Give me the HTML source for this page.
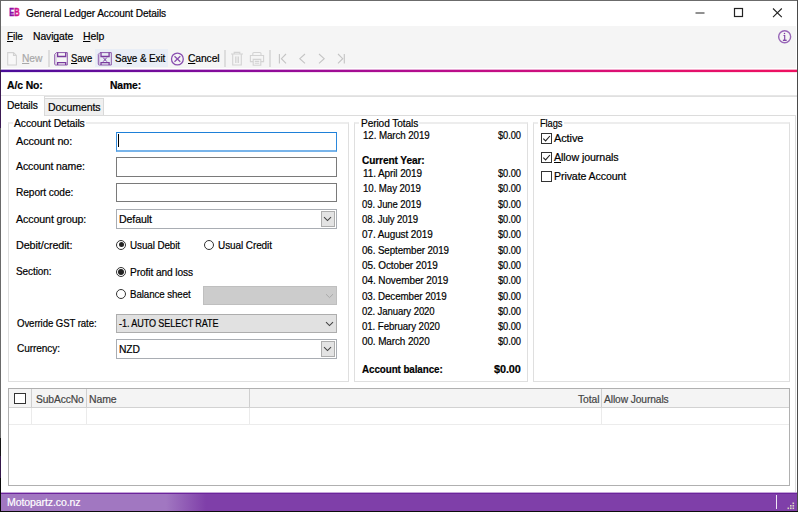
<!DOCTYPE html>
<html><head><meta charset="utf-8"><title>General Ledger Account Details</title>
<style>
html,body{margin:0;padding:0;background:#fff;}
body{width:798px;height:512px;overflow:hidden;}
#win{position:relative;width:798px;height:512px;overflow:hidden;background:#fff;
 font:12px/14px "Liberation Sans",sans-serif;color:#000;}
#win div,#win svg{position:absolute;box-sizing:border-box;}
.t{position:absolute;-webkit-text-stroke:0.2px;transform-origin:0 0;white-space:nowrap;font-size:11px;line-height:14px;height:14px;}
.t u{text-decoration:underline;text-decoration-thickness:1px;text-underline-offset:1px;text-decoration-skip-ink:none;}
.gb{border:1px solid #dfdfdf;border-top:2px solid #ededed;}
.inp{border:1px solid #7a7a7a;background:#fff;}
.cmb{border:1px solid #a9adb3;background:#fff;}
.rad{border:1px solid #333;border-radius:50%;background:#fff;}
.chk{border:1px solid #333;background:#fff;}
.sep{background:#dddddd;width:2px;}

</style></head>
<body>
<div id="win">
<!-- window chrome -->
<div style="left:0;top:0;width:798px;height:26px;background:#fff;"></div>
<div style="left:1px;top:26px;width:795px;height:42px;background:#f5f5f5;"></div>
<div style="left:1px;top:70px;width:796px;height:2px;background:linear-gradient(90deg,#4a0d9a 0%,#8a0c9c 30%,#b80d8c 55%,#dc1072 78%,#ee1160 100%);"></div>
<div style="left:1px;top:69px;width:796px;height:1px;opacity:0.35;background:linear-gradient(90deg,#4a0d9a 0%,#8a0c9c 30%,#b80d8c 55%,#dc1072 78%,#ee1160 100%);"></div>
<div style="left:1px;top:72px;width:796px;height:1px;opacity:0.12;background:linear-gradient(90deg,#4a0d9a 0%,#8a0c9c 30%,#b80d8c 55%,#dc1072 78%,#ee1160 100%);"></div>
<!-- logo -->
<svg style="left:6px;top:4px" width="20" height="16" viewBox="0 0 20 16">
 <defs><linearGradient id="lgg" x1="0" x2="1" y1="0" y2="0"><stop offset="0" stop-color="#6411b0"/><stop offset="0.5" stop-color="#b8149c"/><stop offset="1" stop-color="#e8167a"/></linearGradient></defs>
 <text x="3.2" y="11.8" font-family="Liberation Sans, sans-serif" font-weight="bold" font-size="10" textLength="10.4" lengthAdjust="spacingAndGlyphs" fill="url(#lgg)" stroke="url(#lgg)" stroke-width="0.45">EB</text>
</svg>
<!-- caption buttons -->
<svg style="left:690px;top:4px" width="100" height="18" viewBox="0 0 100 18">
 <path d="M5.5 9H14.5" stroke="#222" stroke-width="1" fill="none"/>
 <rect x="44.5" y="4.5" width="8" height="8" stroke="#222" stroke-width="1.2" fill="none"/>
 <path d="M83 4.5L91.8 13.2M91.8 4.5L83 13.2" stroke="#222" stroke-width="1.1" fill="none"/>
</svg>
<!-- info icon -->
<svg style="left:776px;top:29px" width="18" height="18" viewBox="0 0 18 18">
 <circle cx="8.65" cy="7.75" r="6" stroke="#9866b8" stroke-width="1.4" fill="none"/>
 <path d="M7.5 6.5H8.7V11" stroke="#7d3ea3" stroke-width="1.1" fill="none"/>
 <path d="M6.9 11.3H10.7" stroke="#7d3ea3" stroke-width="1.3" fill="none"/>
 <circle cx="8.5" cy="4.5" r="0.75" fill="#7d3ea3"/>
</svg>
<!-- toolbar -->
<div style="left:95px;top:49px;width:73px;height:18px;background:#e9eef6;"></div>
<svg style="left:0;top:46px" width="360" height="24" viewBox="0 46 360 24">
 <!-- new -->
 <path d="M7.7 52.6H13.5L16.4 55.5V65H7.7Z M13.5 52.6V55.5H16.4" stroke="#d2d2d2" stroke-width="1.1" fill="#f8f8f8"/>
 <!-- save -->
 <g stroke="#7a3a9e" stroke-width="1" fill="none">
  <path d="M56.4 52.6H67.3V65H55.7Q54.7 65 54.7 64V54.4Z" stroke="#8c58ab"/>
  <path d="M57.6 52.6V56.5H65.7V52.6" stroke-width="1.3"/>
  <path d="M57.6 65V62.6H65.7V65" stroke-width="1.3"/>
  <path d="M56 53.5V64.5" stroke="#c9b1d9" stroke-width="0.8"/>
 </g>
 <!-- save & exit -->
 <g stroke="#7a3a9e" stroke-width="1" fill="none">
  <path d="M100 52.6H111.3V65H99.3Q98.3 65 98.3 64V54.4Z" stroke="#8c58ab"/>
  <path d="M101 52.6V56.5H109.1V52.6" stroke-width="1.3"/>
  <path d="M101 65V62.6H109.1V65" stroke-width="1.3"/>
  <path d="M103.2 57.6L106.8 61.6M106.8 57.6L103.2 61.6" stroke-width="1"/>
  <path d="M99.6 53.5V64.5" stroke="#c9b1d9" stroke-width="0.8"/>
 </g>
 <!-- cancel -->
 <circle cx="177.4" cy="59" r="5.9" stroke="#8a4fb0" stroke-width="1.3" fill="none"/>
 <path d="M174.5 56.2L180.3 61.8M180.3 56.2L174.5 61.8" stroke="#8a4fb0" stroke-width="1.3" fill="none"/>
 <!-- trash -->
 <g stroke="#d3d3d3" stroke-width="1.1" fill="none">
  <path d="M231 54H243M234.2 54V52.4H239.8V54M232.7 54V65H241.3V54"/>
  <path d="M235.8 56.4V63M238.3 56.4V63" stroke-width="1.3"/>
  <path d="M236.4 56.4H237.7V63H236.4Z" fill="#e4e4e4" stroke="none"/>
 </g>
 <!-- printer -->
 <g stroke="#d3d3d3" stroke-width="1.1" fill="none">
  <path d="M252.8 55.4V53.6Q252.8 52.5 253.9 52.5H259.9Q261 52.5 261 53.6V55.4"/>
  <path d="M253.2 61.6H250.4V55.5H263.6V61.6H260.8"/>
  <path d="M253.2 59.4H260.8V65.2H253.2Z M254.8 61.4H259.2M254.8 63.2H259.2"/>
 </g>
 <!-- nav -->
 <g stroke="#c4c4c4" stroke-width="1.1" fill="none">
  <path d="M279.4 54V63.4M286 54L281.4 58.7L286 63.4"/>
  <path d="M305 54L299.8 58.7L305 63.4"/>
  <path d="M319 54L324.2 58.7L319 63.4"/>
  <path d="M338 54L342.7 58.7L338 63.4M344.3 54V63.4"/>
 </g>
</svg>
<div class="sep" style="left:48px;top:50px;height:17px;"></div>
<div class="sep" style="left:224px;top:50px;height:17px;"></div>
<div class="sep" style="left:269px;top:50px;height:17px;"></div>

<!-- tab control -->
<div style="left:1px;top:95px;width:796px;height:1px;background:#e6e6e6;"></div><div style="left:1px;top:96px;width:796px;height:1px;background:#e0e0e0;"></div>
<div style="left:44px;top:98px;width:60px;height:17px;background:#f0f0f0;border:1px solid #d9d9d9;border-bottom:none;"></div>
<div style="left:2px;top:115px;width:794px;height:1px;background:#dcdcdc;"></div>
<div style="left:1px;top:96px;width:44px;height:20px;background:#fff;border-right:1px solid #d9d9d9;"></div>

<div style="left:795px;top:115px;width:1px;height:377px;background:#dcdcdc;"></div>
<!-- group boxes -->
<div class="gb" style="left:8px;top:122px;width:341px;height:260px;"></div>
<div style="left:13px;top:118px;width:73px;height:12px;background:#fff;"></div>
<div class="gb" style="left:354px;top:122px;width:174px;height:260px;"></div>
<div style="left:359px;top:118px;width:60px;height:12px;background:#fff;"></div>
<div class="gb" style="left:533px;top:122px;width:257px;height:260px;"></div>
<div style="left:538px;top:118px;width:26px;height:12px;background:#fff;"></div>

<!-- inputs -->
<div class="inp" style="left:116px;top:132px;width:221px;height:20px;border-color:#1e80d8 #2b88dc #78b4ea #3a90de;border-bottom-width:2px;"></div>
<div style="left:118px;top:134px;width:1px;height:13px;background:#000;"></div>
<div class="inp" style="left:116px;top:157px;width:221px;height:20px;"></div>
<div class="inp" style="left:116px;top:183px;width:221px;height:19px;"></div>
<div class="cmb" style="left:116px;top:209px;width:221px;height:20px;"></div>
<div style="left:321px;top:211px;width:14px;height:16px;background:#e3e3e3;border:1px solid #adadad;"></div>
<svg style="left:320px;top:211px" width="15" height="16" viewBox="0 0 15 16"><path d="M4 6.2L7.5 9.6L11 6.2" stroke="#444" stroke-width="1.1" fill="none"/></svg>

<!-- radios -->
<div class="rad" style="left:116px;top:239.6px;width:10px;height:10px;"></div>
<div style="left:118.6px;top:242.1px;width:5px;height:5px;border-radius:50%;background:#222;"></div>
<div class="rad" style="left:204px;top:239.6px;width:10px;height:10px;"></div>
<div class="rad" style="left:116px;top:266.6px;width:10px;height:10px;"></div>
<div style="left:118px;top:268.6px;width:6px;height:6px;border-radius:50%;background:#222;"></div>
<div class="rad" style="left:116px;top:288.6px;width:10px;height:10px;"></div>

<!-- disabled combo -->
<div style="left:203px;top:286px;width:134px;height:19px;background:#cccccc;border:1px solid #bfbfbf;"></div>
<svg style="left:322px;top:288px" width="15" height="16" viewBox="0 0 15 16"><path d="M4 6.2L7.5 9.6L11 6.2" stroke="#aaa" stroke-width="1" fill="none"/></svg>
<!-- gst combo -->
<div style="left:116px;top:314px;width:221px;height:19px;background:#e1e1e1;border:1px solid #adadad;"></div>
<svg style="left:322px;top:316px" width="15" height="16" viewBox="0 0 15 16"><path d="M4 6.2L7.5 9.6L11 6.2" stroke="#444" stroke-width="1.1" fill="none"/></svg>
<!-- currency combo -->
<div class="cmb" style="left:116px;top:339px;width:221px;height:20px;"></div>
<div style="left:321px;top:341px;width:14px;height:16px;background:#e3e3e3;border:1px solid #adadad;"></div>
<svg style="left:320px;top:341px" width="15" height="16" viewBox="0 0 15 16"><path d="M4 6.2L7.5 9.6L11 6.2" stroke="#444" stroke-width="1.1" fill="none"/></svg>

<!-- checkboxes -->
<div class="chk" style="left:541px;top:133px;width:11px;height:11px;"></div>
<svg style="left:541px;top:133px" width="11" height="11" viewBox="0 0 11 11"><path d="M2.3 5.6L4.6 7.9L8.9 3" stroke="#222" stroke-width="1.1" fill="none"/></svg>
<div class="chk" style="left:541px;top:152px;width:11px;height:11px;"></div>
<svg style="left:541px;top:152px" width="11" height="11" viewBox="0 0 11 11"><path d="M2.3 5.6L4.6 7.9L8.9 3" stroke="#222" stroke-width="1.1" fill="none"/></svg>
<div class="chk" style="left:541px;top:171px;width:11px;height:11px;"></div>

<!-- grid -->
<div style="left:8px;top:388px;width:782px;height:98px;border:1px solid #b0b0b0;background:#fff;"></div>
<div style="left:9px;top:389px;width:780px;height:19px;background:#f4f4f4;border-bottom:1px solid #d2d2d2;"></div>
<div style="left:9px;top:424px;width:780px;height:1px;background:#ececec;"></div>
<div style="left:31px;top:389px;width:1px;height:18px;background:#cfcfcf;"></div><div style="left:31px;top:408px;width:1px;height:16px;background:#ebebeb;"></div>
<div style="left:86px;top:389px;width:1px;height:18px;background:#cfcfcf;"></div><div style="left:86px;top:408px;width:1px;height:16px;background:#ebebeb;"></div>
<div style="left:249px;top:389px;width:1px;height:18px;background:#cfcfcf;"></div><div style="left:249px;top:408px;width:1px;height:16px;background:#ebebeb;"></div>
<div style="left:601px;top:389px;width:1px;height:18px;background:#cfcfcf;"></div><div style="left:601px;top:408px;width:1px;height:16px;background:#ebebeb;"></div>
<div class="chk" style="left:14px;top:393px;width:12px;height:11px;"></div>

<!-- status bar -->
<div style="left:1px;top:492px;width:796px;height:1px;background:#c4a6d8;"></div><div style="left:1px;top:493px;width:796px;height:18px;background:linear-gradient(90deg,#a177c1 0,#a177c1 165px,#7f3fa9 205px,#7f3fa9 100%);border-top:1px solid #6c249c;"></div>
<div style="left:776px;top:495px;width:1px;height:14px;background:#f0e8f5;"></div>
<svg style="left:786px;top:500px" width="11" height="11" viewBox="0 0 11 11" fill="#d8d3c0">
 <rect x="6.5" y="2.5" width="1.6" height="1.6"/><rect x="4" y="5" width="1.6" height="1.6"/><rect x="6.5" y="5" width="1.6" height="1.6"/>
 <rect x="1.5" y="7.5" width="1.6" height="1.6"/><rect x="4" y="7.5" width="1.6" height="1.6"/><rect x="6.5" y="7.5" width="1.6" height="1.6"/>
</svg>

<!-- window borders -->
<div style="left:0;top:0;width:798px;height:1px;background:#6b6b6b;"></div>
<div style="left:0;top:0;width:1px;height:70px;background:#666;"></div>
<div style="left:0;top:70px;width:1px;height:58px;background:#3b1a52;"></div>
<div style="left:0;top:128px;width:1px;height:310px;background:#6a6a6a;"></div>
<div style="left:0;top:438px;width:1px;height:18px;background:#151515;"></div>
<div style="left:0;top:456px;width:1px;height:22px;background:#34174a;"></div>
<div style="left:0;top:478px;width:1px;height:34px;background:#0a0a0a;"></div>
<div style="left:797px;top:0;width:1px;height:512px;background:#4a4a4a;"></div>
<div style="left:0;top:511px;width:798px;height:1px;background:#0c0c0c;"></div>

<span class="t" style="left:26.00px;top:6.20px;letter-spacing:-0.100px;transform:scaleX(0.9197);">General Ledger Account Details</span>
<span class="t" style="left:7.40px;top:29.20px;letter-spacing:-0.100px;transform:scaleX(0.9164);"><u>F</u>ile</span>
<span class="t" style="left:33.10px;top:29.20px;letter-spacing:-0.100px;transform:scaleX(0.9428);">Navi<u>g</u>ate</span>
<span class="t" style="left:83.10px;top:29.20px;letter-spacing:-0.100px;transform:scaleX(0.9532);"><u>H</u>elp</span>
<span class="t" style="left:22.10px;top:51.20px;color:#a8a8a8;letter-spacing:-0.100px;transform:scaleX(0.9302);"><u>N</u>ew</span>
<span class="t" style="left:71.20px;top:51.20px;letter-spacing:-0.100px;transform:scaleX(0.8545);"><u>S</u>ave</span>
<span class="t" style="left:114.60px;top:51.20px;letter-spacing:-0.100px;transform:scaleX(0.9000);">Sa<u>v</u>e &amp; Exit</span>
<span class="t" style="left:187.60px;top:51.20px;letter-spacing:-0.100px;transform:scaleX(0.9361);"><u>C</u>ancel</span>
<span class="t" style="left:6.60px;top:77.60px;font-weight:bold;letter-spacing:-0.100px;transform:scaleX(0.9444);">A/c No:</span>
<span class="t" style="left:110.40px;top:77.60px;font-weight:bold;letter-spacing:-0.100px;transform:scaleX(0.9389);">Name:</span>
<span class="t" style="left:7.10px;top:98.20px;letter-spacing:-0.100px;transform:scaleX(0.9324);">Details</span>
<span class="t" style="left:47.80px;top:99.70px;letter-spacing:-0.100px;transform:scaleX(0.9591);">Documents</span>
<span class="t" style="left:14.10px;top:116.20px;letter-spacing:-0.100px;transform:scaleX(0.9435);">Account Details</span>
<span class="t" style="left:16.10px;top:134.20px;letter-spacing:-0.100px;transform:scaleX(0.9861);">Account no:</span>
<span class="t" style="left:16.10px;top:159.20px;letter-spacing:-0.100px;transform:scaleX(0.9532);">Account name:</span>
<span class="t" style="left:16.10px;top:184.70px;letter-spacing:-0.100px;transform:scaleX(0.9258);">Report code:</span>
<span class="t" style="left:16.10px;top:211.60px;letter-spacing:-0.100px;transform:scaleX(0.9669);">Account group:</span>
<span class="t" style="left:16.40px;top:237.80px;letter-spacing:-0.100px;transform:scaleX(0.9825);">Debit/credit:</span>
<span class="t" style="left:16.40px;top:264.00px;letter-spacing:-0.100px;transform:scaleX(0.9089);">Section:</span>
<span class="t" style="left:16.80px;top:315.70px;letter-spacing:-0.100px;transform:scaleX(0.8744);">Override GST rate:</span>
<span class="t" style="left:16.80px;top:341.20px;letter-spacing:-0.100px;transform:scaleX(0.9169);">Currency:</span>
<span class="t" style="left:118.90px;top:211.60px;letter-spacing:-0.100px;transform:scaleX(0.9631);">Default</span>
<span class="t" style="left:129.60px;top:238.20px;letter-spacing:-0.100px;transform:scaleX(0.8967);">Usual Debit</span>
<span class="t" style="left:217.60px;top:238.20px;letter-spacing:-0.100px;transform:scaleX(0.9085);">Usual Credit</span>
<span class="t" style="left:129.60px;top:264.70px;letter-spacing:-0.100px;transform:scaleX(0.9237);">Profit and loss</span>
<span class="t" style="left:129.60px;top:286.70px;letter-spacing:-0.100px;transform:scaleX(0.8857);">Balance sheet</span>
<span class="t" style="left:119.10px;top:316.20px;letter-spacing:-0.100px;transform:scaleX(0.8232);">-1. AUTO SELECT RATE</span>
<span class="t" style="left:119.10px;top:341.50px;letter-spacing:-0.100px;transform:scaleX(0.9368);">NZD</span>
<span class="t" style="left:360.60px;top:115.70px;letter-spacing:-0.100px;transform:scaleX(0.9196);">Period Totals</span>
<span class="t" style="left:363.00px;top:127.90px;letter-spacing:-0.100px;transform:scaleX(0.8876);">12. March 2019</span>
<span class="t" style="left:497.60px;top:127.90px;letter-spacing:-0.100px;transform:scaleX(0.8472);">$0.00</span>
<span class="t" style="left:363.00px;top:165.70px;letter-spacing:-0.100px;transform:scaleX(0.9067);">11. April 2019</span>
<span class="t" style="left:497.60px;top:165.70px;letter-spacing:-0.100px;transform:scaleX(0.8472);">$0.00</span>
<span class="t" style="left:363.00px;top:180.90px;letter-spacing:-0.100px;transform:scaleX(0.8830);">10. May 2019</span>
<span class="t" style="left:497.60px;top:180.90px;letter-spacing:-0.100px;transform:scaleX(0.8472);">$0.00</span>
<span class="t" style="left:362.20px;top:196.50px;letter-spacing:-0.100px;transform:scaleX(0.8636);">09. June 2019</span>
<span class="t" style="left:497.60px;top:196.50px;letter-spacing:-0.100px;transform:scaleX(0.8472);">$0.00</span>
<span class="t" style="left:362.20px;top:211.60px;letter-spacing:-0.100px;transform:scaleX(0.8747);">08. July 2019</span>
<span class="t" style="left:497.60px;top:211.60px;letter-spacing:-0.100px;transform:scaleX(0.8472);">$0.00</span>
<span class="t" style="left:362.20px;top:227.00px;letter-spacing:-0.100px;transform:scaleX(0.9049);">07. August 2019</span>
<span class="t" style="left:497.60px;top:227.00px;letter-spacing:-0.100px;transform:scaleX(0.8472);">$0.00</span>
<span class="t" style="left:362.20px;top:242.50px;letter-spacing:-0.100px;transform:scaleX(0.8878);">06. September 2019</span>
<span class="t" style="left:497.60px;top:242.50px;letter-spacing:-0.100px;transform:scaleX(0.8472);">$0.00</span>
<span class="t" style="left:362.20px;top:257.90px;letter-spacing:-0.100px;transform:scaleX(0.9063);">05. October 2019</span>
<span class="t" style="left:497.60px;top:257.90px;letter-spacing:-0.100px;transform:scaleX(0.8472);">$0.00</span>
<span class="t" style="left:362.20px;top:273.10px;letter-spacing:-0.100px;transform:scaleX(0.9070);">04. November 2019</span>
<span class="t" style="left:497.60px;top:273.10px;letter-spacing:-0.100px;transform:scaleX(0.8472);">$0.00</span>
<span class="t" style="left:362.20px;top:288.50px;letter-spacing:-0.100px;transform:scaleX(0.8912);">03. December 2019</span>
<span class="t" style="left:497.60px;top:288.50px;letter-spacing:-0.100px;transform:scaleX(0.8472);">$0.00</span>
<span class="t" style="left:362.20px;top:303.70px;letter-spacing:-0.100px;transform:scaleX(0.8703);">02. January 2020</span>
<span class="t" style="left:497.60px;top:303.70px;letter-spacing:-0.100px;transform:scaleX(0.8472);">$0.00</span>
<span class="t" style="left:362.20px;top:319.10px;letter-spacing:-0.100px;transform:scaleX(0.8822);">01. February 2020</span>
<span class="t" style="left:497.60px;top:319.10px;letter-spacing:-0.100px;transform:scaleX(0.8472);">$0.00</span>
<span class="t" style="left:362.20px;top:334.40px;letter-spacing:-0.100px;transform:scaleX(0.9009);">00. March 2020</span>
<span class="t" style="left:497.60px;top:334.40px;letter-spacing:-0.100px;transform:scaleX(0.8472);">$0.00</span>
<span class="t" style="left:362.20px;top:153.00px;font-weight:bold;letter-spacing:-0.100px;transform:scaleX(0.9179);">Current Year:</span>
<span class="t" style="left:362.20px;top:362.20px;font-weight:bold;letter-spacing:-0.100px;transform:scaleX(0.8947);">Account balance:</span>
<span class="t" style="left:494.30px;top:362.20px;font-weight:bold;letter-spacing:-0.100px;transform:scaleX(0.9877);">$0.00</span>
<span class="t" style="left:539.60px;top:116.00px;letter-spacing:-0.100px;transform:scaleX(0.8445);">Flags</span>
<span class="t" style="left:554.40px;top:131.00px;letter-spacing:-0.100px;transform:scaleX(0.9977);">Active</span>
<span class="t" style="left:554.40px;top:150.20px;letter-spacing:-0.100px;transform:scaleX(0.9703);"><u>A</u>llow journals</span>
<span class="t" style="left:554.40px;top:169.20px;letter-spacing:-0.100px;transform:scaleX(0.9635);">Private Account</span>
<span class="t" style="left:36.10px;top:392.20px;color:#444;letter-spacing:-0.100px;transform:scaleX(0.9319);">SubAccNo</span>
<span class="t" style="left:88.60px;top:392.20px;color:#444;letter-spacing:-0.100px;transform:scaleX(0.9501);">Name</span>
<span class="t" style="left:578.40px;top:392.20px;color:#444;letter-spacing:-0.100px;transform:scaleX(0.9407);">Total</span>
<span class="t" style="left:604.00px;top:392.20px;color:#444;letter-spacing:-0.100px;transform:scaleX(0.9292);">Allow Journals</span>
<span class="t" style="left:6.80px;top:495.20px;color:#fff;letter-spacing:-0.100px;transform:scaleX(0.9575);">Motopartz.co.nz</span>
</div>
</body></html>
